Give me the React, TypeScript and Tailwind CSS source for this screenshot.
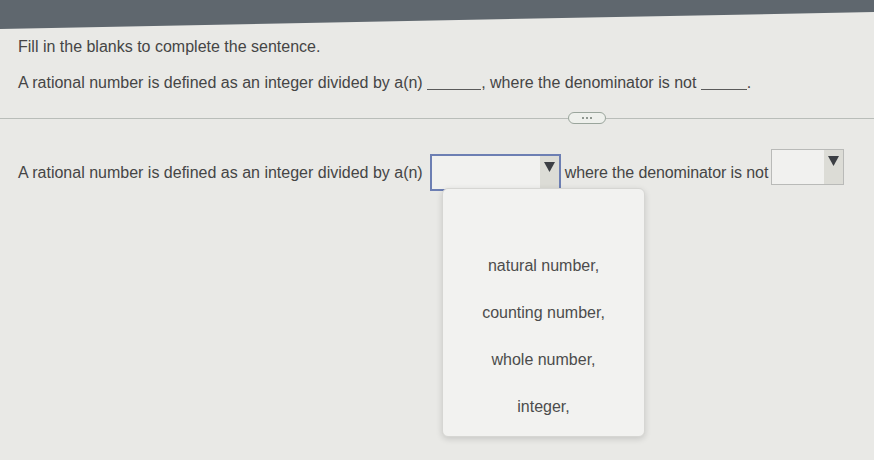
const options = ["", "natural number,", "counting number,", "whole number,", "integer,"];

const Blank = ({ width }: { width: string }) => (
  <span className={`inline-block ${width} border-b border-[#5a5a5a] translate-y-[2px]`}></span>
);

const SelectBox = ({ active, className }: { active?: boolean; className: string }) => (
  <div
    className={`flex justify-end bg-[#f1f1ef] ${className} ${
      active ? "border-2 border-[#6d7fb3]" : "border border-[#b9bab8]"
    }`}
  >
    <div className="w-[19px] flex items-start justify-center pt-[5px] bg-[#dcdcd6]">
      <svg width="11" height="11" viewBox="0 0 11 11">
        <polygon points="0,1 11,1 5.5,11" fill="#3c3f44" />
      </svg>
    </div>
  </div>
);

const App = () => {
  return (
    <div
      className="relative w-[874px] h-[460px] overflow-hidden bg-[#e9e9e6] text-[#454545] text-[16px]"
      style={{ fontFamily: '"Liberation Sans", Arial, sans-serif' }}
    >
      {/* top bar */}
      <div className="h-[29px] bg-[#5f676e] [clip-path:polygon(0_0,100%_0,100%_12px,0_29px)]"></div>

      <div className="mt-[9px] pl-[18px]">
        <p className="leading-[18px]">Fill in the blanks to complete the sentence.</p>
        <p className="mt-[18px] leading-[18px] whitespace-nowrap">
          A rational number is defined as an integer divided by a(n) <Blank width="w-[54px]" />, where the
          denominator is not <Blank width="w-[46px]" />.
        </p>
      </div>

      {/* divider */}
      <div className="mt-[20px] flex items-center">
        <div className="h-px flex-1 bg-[#b9bdb9]"></div>
        <div className="w-[38px] h-[12px] rounded-full border border-[#9aa59c] bg-[#eef0ec] flex items-center justify-center gap-[2px]">
          <span className="w-[2px] h-[2px] rounded-full bg-[#6f7a72]"></span>
          <span className="w-[2px] h-[2px] rounded-full bg-[#6f7a72]"></span>
          <span className="w-[2px] h-[2px] rounded-full bg-[#6f7a72]"></span>
        </div>
        <div className="h-px w-[268px] bg-[#b9bdb9]"></div>
      </div>

      {/* answer row */}
      <div className="mt-[30px] pl-[18px] flex items-center whitespace-nowrap">
        <span>A rational number is defined as an integer divided by a(n)</span>
        <SelectBox active className="ml-[7px] w-[131px] h-[37px]" />
        <span className="ml-[4px] tracking-[-0.1px]">where the denominator is not</span>
        <SelectBox className="ml-[3px] w-[73px] h-[36px] -translate-y-[6px]" />
      </div>

      {/* dropdown list */}
      <div className="absolute left-[442px] top-[188px] w-[203px] h-[249px] pt-[6px] rounded-md border border-[#d6d6d3] bg-[#f2f2f0] shadow-[0_2px_6px_rgba(0,0,0,0.15)]">
        {options.map((o, i) => (
          <div key={i} className="h-[47px] flex items-center justify-center text-[#4c4c4c]">
            {o}
          </div>
        ))}
      </div>
    </div>
  );
};

export default App;
